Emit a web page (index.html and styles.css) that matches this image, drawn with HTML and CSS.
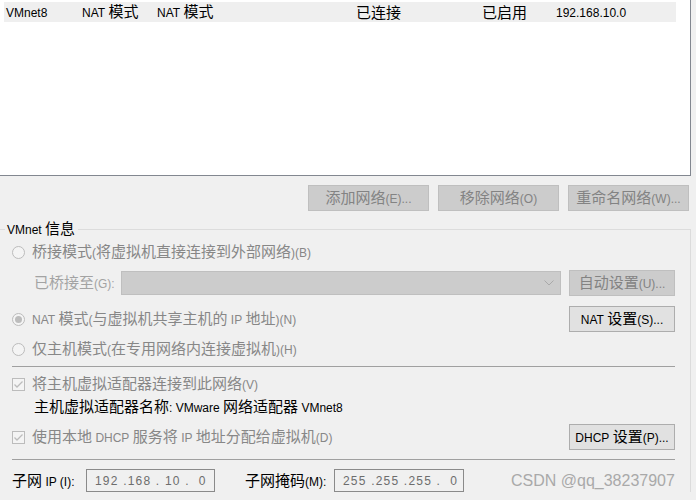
FILE: index.html
```html
<!DOCTYPE html>
<html lang="zh-CN">
<head>
<meta charset="utf-8">
<title>虚拟网络编辑器</title>
<link rel="stylesheet" href="styles.css">
</head>
<body>
<div class="list">
  <div class="row sel">
    <span class="c1"><span class="l">VMnet8</span></span>
    <span class="c2"><span class="l">NAT</span> 模式</span>
    <span class="c3"><span class="l">NAT</span> 模式</span>
    <span class="c4">已连接</span>
    <span class="c5">已启用</span>
    <span class="c6"><span class="l">192.168.10.0</span></span>
  </div>
</div>

<div class="actions">
  <button class="btn wide" disabled><span>添加网络<span class="l">(E)...</span></span></button>
  <button class="btn wide" disabled><span>移除网络<span class="l">(O)</span></span></button>
  <button class="btn wide" disabled><span>重命名网络<span class="l">(W)...</span></span></button>
</div>

<fieldset class="group">
  <legend><span class="l">VMnet</span> 信息</legend>
  <div class="gbody">
    <div class="opt dis r-a">
      <span class="radio"></span>
      <span>桥接模式<span class="l">(</span>将虚拟机直接连接到外部网络<span class="l">)(B)</span></span>
    </div>

    <div class="bridge">
      <span class="blabel">已桥接至<span class="l">(G):</span></span>
      <div class="combo">
        <svg class="chev" width="10" height="6" viewBox="0 0 10 6"><polyline points="0.5,0.5 5,5 9.5,0.5" fill="none" stroke="#a9a9a9" stroke-width="1"/></svg>
      </div>
      <button class="btn side" disabled><span>自动设置<span class="l">(U)...</span></span></button>
    </div>

    <div class="line2 r-c">
      <div class="opt dis">
        <span class="radio"><span class="dot"></span></span>
        <span><span class="l">NAT</span> 模式<span class="l">(</span>与虚拟机共享主机的 <span class="l">IP</span> 地址<span class="l">)(N)</span></span>
      </div>
      <button class="btn side"><span><span class="l">NAT</span> 设置<span class="l">(S)...</span></span></button>
    </div>

    <div class="opt dis r-d">
      <span class="radio"></span>
      <span>仅主机模式<span class="l">(</span>在专用网络内连接虚拟机<span class="l">)(H)</span></span>
    </div>

    <div class="sep s1"></div>

    <div class="opt dis r-e">
      <span class="check"><svg width="11" height="11" viewBox="0 0 11 11"><polyline points="1.5,5.5 4,8 9.5,2.5" fill="none" stroke="#bcbcbc" stroke-width="1.3"/></svg></span>
      <span>将主机虚拟适配器连接到此网络<span class="l">(V)</span></span>
    </div>

    <div class="adapter"><span>主机虚拟适配器名称<span class="l">: VMware</span> 网络适配器 <span class="l">VMnet8</span></span></div>

    <div class="line2 r-g">
      <div class="opt dis">
        <span class="check"><svg width="11" height="11" viewBox="0 0 11 11"><polyline points="1.5,5.5 4,8 9.5,2.5" fill="none" stroke="#bcbcbc" stroke-width="1.3"/></svg></span>
        <span>使用本地 <span class="l">DHCP</span> 服务将 <span class="l">IP</span> 地址分配给虚拟机<span class="l">(D)</span></span>
      </div>
      <button class="btn side"><span><span class="l">DHCP</span> 设置<span class="l">(P)...</span></span></button>
    </div>

    <div class="sep s2"></div>

    <div class="subnet">
      <span class="sl1">子网 <span class="l">IP (I):</span></span>
      <span class="ip ip1">192 .168 . 10 .  0</span>
      <span class="sl2">子网掩码<span class="l">(M):</span></span>
      <span class="ip ip2">255 .255 .255 .  0</span>
      <span class="mark">CSDN @qq_38237907</span>
    </div>
  </div>
</fieldset>
</body>
</html>
```
FILE: styles.css
```css
* { box-sizing: border-box; }

body {
  margin: 0;
  width: 696px;
  height: 500px;
  overflow: hidden;
  background: #f0f0f0;
  color: #000;
  font-family: "Noto Sans CJK SC", sans-serif;
  font-size: 15px;
  line-height: 20px;
}

.l {
  font-family: "Liberation Sans", "Noto Sans", sans-serif;
  font-size: 12px;
}

/* network list */
.list {
  width: 691px;
  height: 176px;
  background: #fff;
  border-right: 1px solid #828790;
  border-bottom: 1px solid #828790;
  padding: 2px 0 0 4px;
}

.row {
  display: flex;
  align-items: center;
  height: 20px;
  width: 672px;
  white-space: nowrap;
}

.sel { background: #efefef; }

.c1 { width: 78px; padding-left: 2px; }
.c2 { width: 75px; }
.c3 { width: 199px; }
.c4 { width: 126px; }
.c5 { width: 74px; }
.c6 { flex: 1; }

/* buttons */
.actions {
  display: flex;
  justify-content: flex-end;
  gap: 9px;
  padding-right: 7px;
  margin-top: 9px;
}

.btn {
  height: 26px;
  padding: 0;
  margin: 0;
  font: inherit;
  line-height: 20px;
  border: 1px solid #adadad;
  background: #e1e1e1;
  color: #000;
  display: flex;
  align-items: center;
  justify-content: center;
  white-space: nowrap;
}

.btn:disabled {
  background: #cccccc;
  border-color: #bfbfbf;
  color: #838383;
}

.wide { width: 121px; }
.side { width: 106px; }

/* group box */
.group {
  margin: 7px 0 0;
  padding: 0;
  width: 691px;
  min-width: 0;
  border: none;
  border-top: 1px solid #dcdcdc;
  border-right: 1px solid #dcdcdc;
}

.group legend {
  margin-left: 5px;
  padding: 0 3px 0 2px;
  line-height: 20px;
}

.gbody {
  padding: 0 15px 0 12px;
}

.dis { color: #878787; }

.opt {
  display: flex;
  align-items: center;
  height: 24px;
  white-space: nowrap;
}

.radio {
  width: 13px;
  height: 13px;
  border: 1px solid #bcbcbc;
  border-radius: 50%;
  background: #f4f4f4;
  margin-right: 7px;
  display: flex;
  align-items: center;
  justify-content: center;
  flex: none;
}

.radio .dot {
  width: 7px;
  height: 7px;
  border-radius: 50%;
  background: #bcbcbc;
}

.check {
  width: 13px;
  height: 13px;
  border: 1px solid #bcbcbc;
  background: #f4f4f4;
  margin-right: 7px;
  display: flex;
  align-items: center;
  justify-content: center;
  flex: none;
}

.check svg { display: block; }

.bridge {
  display: flex;
  align-items: center;
  height: 26px;
  margin-top: 6px;
  padding-left: 22px;
}

.blabel {
  width: 87px;
  white-space: nowrap;
  color: #a3a3a3;
}

.combo {
  width: 440px;
  height: 24px;
  background: #cccccc;
  border: 1px solid #bfbfbf;
  display: flex;
  align-items: center;
  justify-content: flex-end;
  padding-right: 6px;
  margin-right: 8px;
}

.chev { display: block; }

.line2 {
  display: flex;
  align-items: center;
  justify-content: space-between;
  height: 26px;
}

.r-c { margin-top: 10px; }
.r-d { margin-top: 5px; }

.sep {
  height: 1px;
  background: #a0a0a0;
}

.s1 { margin-top: 5px; }
.r-e { margin-top: 5px; }

.adapter {
  height: 20px;
  margin-top: 1px;
  padding-left: 22px;
  display: flex;
  align-items: center;
  white-space: nowrap;
}

.r-g { margin-top: 7px; }
.s2 { margin-top: 9px; }

.subnet {
  display: flex;
  align-items: center;
  height: 23px;
  margin-top: 9px;
  white-space: nowrap;
}

.sl1 { width: 74px; }
.sl2 { width: 89px; margin-left: 30px; }

.ip {
  height: 23px;
  border: 1px solid #8a8a8a;
  background: #f0f0f0;
  color: #6d6d6d;
  font-family: "Liberation Sans", "Noto Sans", sans-serif;
  font-size: 12px;
  letter-spacing: 1.2px;
  white-space: pre;
  padding-left: 8px;
  display: flex;
  align-items: center;
}

.ip1 { width: 129px; }
.ip2 { width: 130px; }

.mark {
  margin-left: 47px;
  font-family: "Liberation Sans", sans-serif;
  font-size: 16px;
  color: #a9a9a9;
}
```
